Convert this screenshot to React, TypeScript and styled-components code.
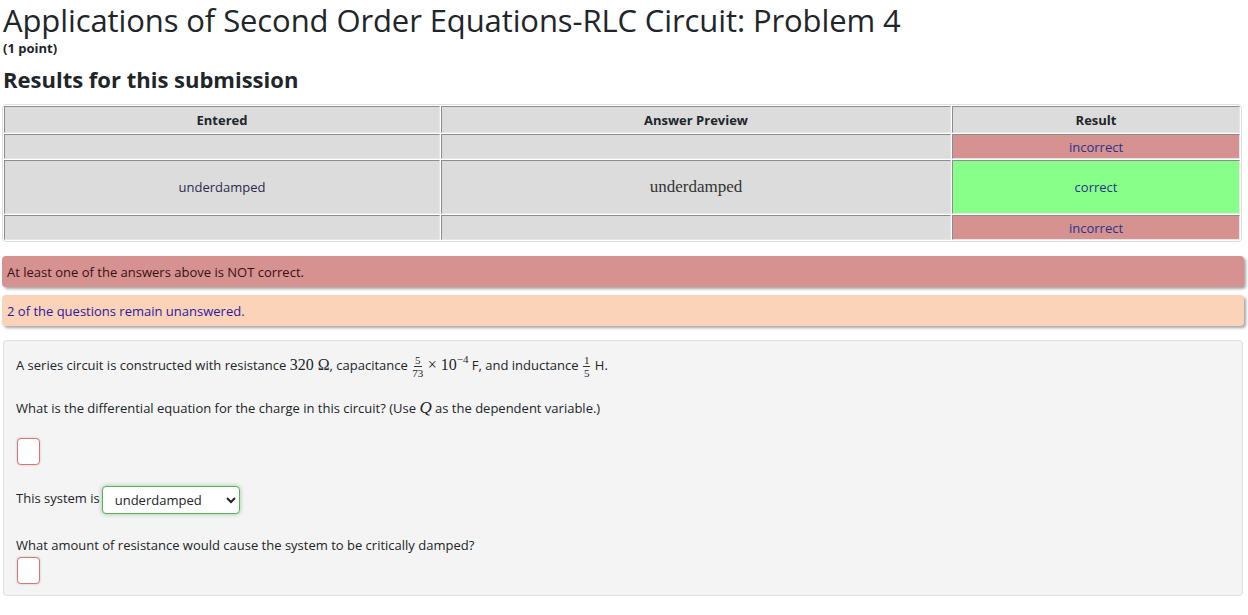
import React from "react";
import styled, { createGlobalStyle } from "styled-components";

const GlobalStyle = createGlobalStyle`
  html, body {
    margin: 0;
    padding: 0;
    background: #ffffff;
  }
  body {
    font-family: "Segoe UI", "Open Sans", "Noto Sans", sans-serif;
    color: #212529;
  }
`;

type Status = "correct" | "incorrect";

const rows: { entered: string; preview: string; result: Status; tall?: boolean }[] = [
  { entered: "", preview: "", result: "incorrect" },
  { entered: "underdamped", preview: "underdamped", result: "correct", tall: true },
  { entered: "", preview: "", result: "incorrect" },
];

function App() {
  return (
    <Page>
      <GlobalStyle />
      <Title>Applications of Second Order Equations-RLC Circuit: Problem 4</Title>
      <Points>(1 point)</Points>
      <SubTitle>Results for this submission</SubTitle>

      <ResultsTable>
        <colgroup>
          <col style={{ width: 436 }} />
          <col style={{ width: 510 }} />
          <col />
        </colgroup>
        <thead>
          <tr>
            <HeadCell>Entered</HeadCell>
            <HeadCell>Answer Preview</HeadCell>
            <HeadCell>Result</HeadCell>
          </tr>
        </thead>
        <tbody>
          {rows.map((r, i) => (
            <tr key={i}>
              <Cell $tall={r.tall}>{r.entered}</Cell>
              <PreviewCell $tall={r.tall}>{r.preview}</PreviewCell>
              <ResultCell $status={r.result}>{r.result}</ResultCell>
            </tr>
          ))}
        </tbody>
      </ResultsTable>

      <Alert $kind="error">At least one of the answers above is NOT correct.</Alert>
      <Alert $kind="warning">2 of the questions remain unanswered.</Alert>

      <ProblemBox>
        <Para>
          A series circuit is constructed with resistance <MathText>320&nbsp;Ω</MathText>,
          capacitance{" "}
          <Frac>
            <span>5</span>
            <span>73</span>
          </Frac>{" "}
          <MathText>
            × 10<Sup>−4</Sup>
          </MathText>{" "}
          F, and inductance{" "}
          <Frac>
            <span>1</span>
            <span>5</span>
          </Frac>{" "}
          H.
        </Para>
        <Para>
          What is the differential equation for the charge in this circuit? (Use{" "}
          <MathVar>Q</MathVar> as the dependent variable.)
        </Para>
        <AnswerBox />
        <SelectRow>
          <span>This system is</span>
          <Dropdown defaultValue="underdamped">
            <option value="">?</option>
            <option value="overdamped">overdamped</option>
            <option value="critically">critically damped</option>
            <option value="underdamped">underdamped</option>
          </Dropdown>
        </SelectRow>
        <LastQuestion>What amount of resistance would cause the system to be critically damped?</LastQuestion>
        <AnswerBox />
      </ProblemBox>
    </Page>
  );
}

export default App;

const Page = styled.div`
  padding: 0 4px 0 2px;
  width: 1242px;
  box-sizing: border-box;
`;

const Title = styled.h1`
  margin: 0;
  padding-left: 1px;
  font-size: 31px;
  font-weight: 400;
  line-height: 40px;
  color: #212529;
  letter-spacing: -0.1px;
`;

const Points = styled.div`
  padding-left: 1px;
  margin-top: 1px;
  font-size: 13px;
  font-weight: 700;
  line-height: 15px;
`;

const SubTitle = styled.h2`
  margin: 8px 0 10px;
  padding-left: 1px;
  font-size: 22px;
  font-weight: 700;
  line-height: 30px;
`;

const ResultsTable = styled.table`
  width: 1240px;
  table-layout: fixed;
  border-collapse: separate;
  border-spacing: 1px;
  border: 1px solid #dedede;
  border-radius: 4px;
  font-size: 13px;
  text-align: center;
`;

const baseCell = `
  background: #dcdcdc;
  border-top: 1px solid #8c8c8c;
  border-left: 1px solid #8c8c8c;
  border-right: 1px solid #e6e6e6;
  border-bottom: 1px solid #e6e6e6;
  padding: 0 4px;
  vertical-align: middle;
`;

const HeadCell = styled.th`
  ${baseCell}
  height: 25px;
  font-weight: 700;
  color: #212529;
`;

const Cell = styled.td<{ $tall?: boolean }>`
  ${baseCell}
  height: ${(p) => (p.$tall ? "52px" : "23px")};
  color: #2a2a4a;
`;

const PreviewCell = styled(Cell)`
  font-family: "Liberation Serif", "DejaVu Serif", serif;
  font-size: 17px;
  color: #333;
`;

const ResultCell = styled.td<{ $status: Status }>`
  ${baseCell}
  background: ${(p) => (p.$status === "correct" ? "#88ff88" : "#d69191")};
  color: #26358a;
`;

const Alert = styled.div<{ $kind: "error" | "warning" }>`
  margin: 14px 0 0 0;
  width: 1242px;
  box-sizing: border-box;
  height: 31px;
  display: flex;
  align-items: center;
  padding: 0 5px;
  font-size: 13px;
  border-radius: 4px;
  background: ${(p) => (p.$kind === "error" ? "#d69191" : "#fad3b9")};
  color: ${(p) => (p.$kind === "error" ? "#3a1010" : "#2a1aa0")};
  box-shadow: 2px 2px 3px #a6a6a6;

  & + & {
    margin-top: 8px;
  }
`;

const ProblemBox = styled.div`
  margin: 14px 0 0 1px;
  width: 1240px;
  box-sizing: border-box;
  height: 256px;
  background: #f4f4f4;
  border: 1px solid #e0e0e0;
  border-radius: 4px;
  padding: 13px 12px 0;
  font-size: 13px;
  color: #212529;
`;

const Para = styled.p`
  margin: 0 0 19px;
  line-height: 22px;
`;

const MathText = styled.span`
  font-family: "Liberation Serif", "DejaVu Serif", serif;
  font-size: 16px;
`;

const MathVar = styled.span`
  font-family: "Liberation Serif", "DejaVu Serif", serif;
  font-style: italic;
  font-size: 17px;
`;

const Sup = styled.sup`
  font-size: 11px;
  vertical-align: 7px;
  line-height: 0;
`;

const Frac = styled.span`
  display: inline-flex;
  flex-direction: column;
  align-items: center;
  vertical-align: middle;
  margin: 0 1px;
  font-family: "Liberation Serif", "DejaVu Serif", serif;
  font-size: 11px;
  line-height: 10px;

  & > span:first-child {
    border-bottom: 1px solid #333;
    padding: 0 1px 1px;
  }
  & > span:last-child {
    padding-top: 1px;
  }
`;

const AnswerBox = styled.div`
  width: 23px;
  height: 27px;
  box-sizing: border-box;
  background: #ffffff;
  border: 1px solid #d07a7a;
  border-radius: 4px;
  box-shadow: 0 0 2px rgba(200, 80, 80, 0.45);
  margin-left: 1px;
`;

const SelectRow = styled.div`
  display: flex;
  align-items: flex-start;
  gap: 2px;
  margin: 22px 0 0;
  line-height: 22px;
`;

const Dropdown = styled.select`
  width: 138px;
  height: 28px;
  margin-top: -1px;
  padding: 0 6px 0 8px;
  font-family: "Segoe UI", "Open Sans", "Noto Sans", sans-serif;
  font-size: 13px;
  color: #212529;
  background: #ffffff;
  border: 1px solid #5fae5f;
  border-radius: 4px;
  box-shadow: 0 0 4px rgba(60, 170, 60, 0.55);
`;

const LastQuestion = styled.p`
  margin: 21px 0 2px;
  line-height: 20px;
`;
